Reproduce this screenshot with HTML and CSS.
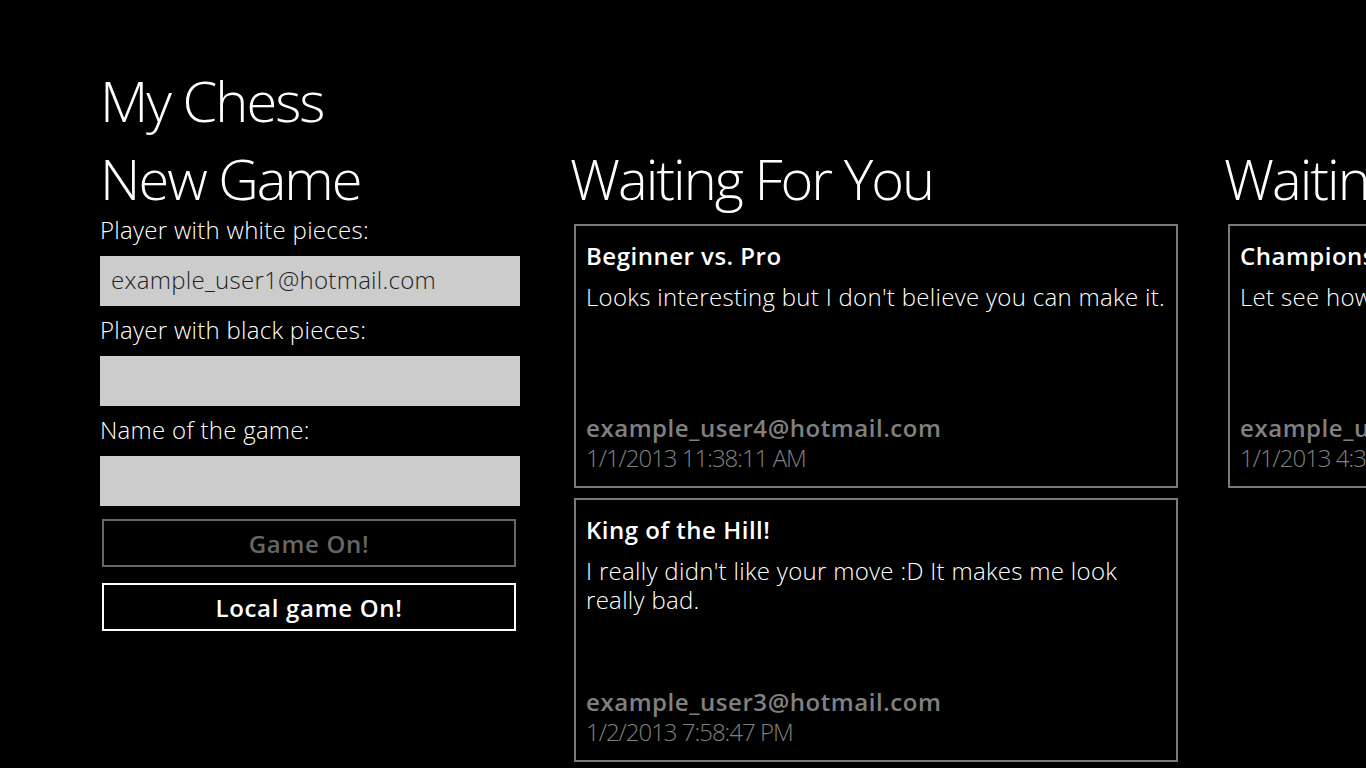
FILE: index.html
```html
<!DOCTYPE html>
<html lang="en">
<head>
<meta charset="utf-8">
<title>My Chess</title>
<link rel="stylesheet" href="styles.css">
</head>
<body>
<div class="page">
  <h1 class="app-title">My Chess</h1>
  <div class="hub">
    <section class="hub-section new-game">
      <h2 class="section-title">New Game</h2>
      <div class="field">
        <label class="field-label">Player with white pieces:</label>
        <div class="field-input">example_user1@hotmail.com</div>
      </div>
      <div class="field">
        <label class="field-label">Player with black pieces:</label>
        <div class="field-input"></div>
      </div>
      <div class="field">
        <label class="field-label">Name of the game:</label>
        <div class="field-input"></div>
      </div>
      <button class="btn btn-disabled">Game On!</button>
      <button class="btn">Local game On!</button>
    </section>

    <section class="hub-section games">
      <h2 class="section-title">Waiting For You</h2>
      <div class="card-list">
        <div class="card">
          <div class="card-title">Beginner vs. Pro</div>
          <div class="card-text">Looks interesting but I don't believe you can make it.</div>
          <div class="card-user">example_user4@hotmail.com</div>
          <div class="card-date">1/1/2013 11:38:11 AM</div>
        </div>
        <div class="card">
          <div class="card-title">King of the Hill!</div>
          <div class="card-text">I really didn't like your move :D It makes me look really bad.</div>
          <div class="card-user">example_user3@hotmail.com</div>
          <div class="card-date">1/2/2013 7:58:47 PM</div>
        </div>
      </div>
    </section>

    <section class="hub-section games">
      <h2 class="section-title">Waiting For Opponent</h2>
      <div class="card-list">
        <div class="card">
          <div class="card-title">Championship</div>
          <div class="card-text">Let see how you handle this one.</div>
          <div class="card-user">example_user2@hotmail.com</div>
          <div class="card-date">1/1/2013 4:32:05 PM</div>
        </div>
      </div>
    </section>
  </div>
</div>
</body>
</html>
```

FILE: styles.css
```css
html, body {
  margin: 0;
  padding: 0;
  background: #000;
  height: 100%;
  overflow: hidden;
}

body {
  font-family: "Open Sans", "Noto Sans", sans-serif;
  color: #fff;
}

.page {
  padding: 72px 0 0 100px;
}

.app-title {
  margin: 0;
  font-size: 56px;
  line-height: 56px;
  font-weight: 300;
  letter-spacing: -2px;
  white-space: nowrap;
}

.hub {
  display: flex;
  align-items: flex-start;
  margin-top: 22px;
}

.hub-section {
  flex-shrink: 0;
}

.new-game {
  width: 420px;
  margin-right: 50px;
}

.games {
  width: 608px;
  margin-right: 46px;
}

.section-title {
  margin: 0;
  font-size: 56px;
  line-height: 56px;
  font-weight: 300;
  letter-spacing: -2px;
  white-space: nowrap;
}

.field {
  display: flex;
  flex-direction: column;
  margin-top: 9px;
}

.field-label {
  font-size: 24px;
  line-height: 30px;
  font-weight: 300;
  letter-spacing: 0.28px;
  white-space: nowrap;
}

.field-input {
  margin-top: 11px;
  height: 50px;
  box-sizing: border-box;
  background: #cccccc;
  color: #222;
  font-size: 24px;
  line-height: 30px;
  font-weight: 300;
  letter-spacing: 0.28px;
  padding: 9px 11px;
}

.btn {
  display: block;
  width: 414px;
  height: 48px;
  margin: 13px 0 0 2px;
  background: #000;
  border: 2px solid #fff;
  color: #fff;
  font-family: "Open Sans", "Noto Sans", sans-serif;
  font-size: 24px;
  font-weight: 600;
  letter-spacing: 0.7px;
  padding: 0;
}

.btn + .btn {
  margin-top: 16px;
}

.btn-disabled {
  border-color: #666;
  color: #666;
}

.card-list {
  display: flex;
  flex-direction: column;
  gap: 10px;
  margin: 18px 0 0 4px;
}

.card {
  box-sizing: border-box;
  width: 604px;
  height: 264px;
  border: 2px solid #7a7a7a;
  padding: 15px 2px 14px 10px;
  display: flex;
  flex-direction: column;
  overflow: hidden;
}

.card-title {
  font-size: 24px;
  line-height: 30px;
  font-weight: 600;
  letter-spacing: 0.5px;
  white-space: nowrap;
}

.card-text {
  flex: 1;
  margin-top: 11px;
  font-size: 24px;
  line-height: 29px;
  font-weight: 300;
  letter-spacing: 0.3px;
}

.card-user {
  font-size: 24px;
  line-height: 30px;
  font-weight: 600;
  letter-spacing: 0.56px;
  color: #808080;
  white-space: nowrap;
}

.card-date {
  font-size: 24px;
  line-height: 29px;
  font-weight: 300;
  letter-spacing: -1px;
  color: #808080;
  white-space: nowrap;
}
```
